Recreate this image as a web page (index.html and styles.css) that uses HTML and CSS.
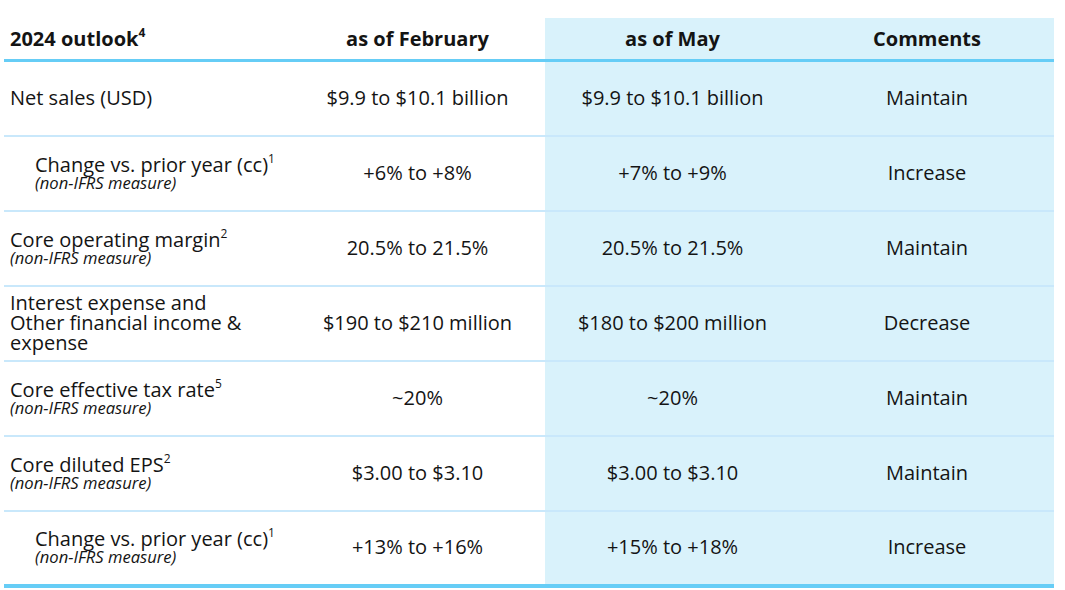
FILE: index.html
```html
<!DOCTYPE html>
<html>
<head>
<meta charset="utf-8">
<link rel="stylesheet" href="styles.css">
</head>
<body>
<div class="table">
  <div class="row head">
    <div class="cell label"><div class="main">2024 outlook<sup>4</sup></div></div>
    <div class="cell">as of February</div>
    <div class="cell hl">as of May</div>
    <div class="cell hl">Comments</div>
  </div>
  <div class="row">
    <div class="cell label"><div class="main">Net sales (USD)</div></div>
    <div class="cell">$9.9 to $10.1 billion</div>
    <div class="cell hl">$9.9 to $10.1 billion</div>
    <div class="cell hl">Maintain</div>
  </div>
  <div class="row">
    <div class="cell label indent"><div class="main">Change vs. prior year (cc)<sup>1</sup></div><div class="note">(non-IFRS measure)</div></div>
    <div class="cell">+6% to +8%</div>
    <div class="cell hl">+7% to +9%</div>
    <div class="cell hl">Increase</div>
  </div>
  <div class="row">
    <div class="cell label"><div class="main">Core operating margin<sup>2</sup></div><div class="note">(non-IFRS measure)</div></div>
    <div class="cell">20.5% to 21.5%</div>
    <div class="cell hl">20.5% to 21.5%</div>
    <div class="cell hl">Maintain</div>
  </div>
  <div class="row">
    <div class="cell label"><div class="main multi">Interest expense and<br>Other financial income &amp;<br>expense</div></div>
    <div class="cell">$190 to $210 million</div>
    <div class="cell hl">$180 to $200 million</div>
    <div class="cell hl">Decrease</div>
  </div>
  <div class="row">
    <div class="cell label"><div class="main">Core effective tax rate<sup>5</sup></div><div class="note">(non-IFRS measure)</div></div>
    <div class="cell">~20%</div>
    <div class="cell hl">~20%</div>
    <div class="cell hl">Maintain</div>
  </div>
  <div class="row">
    <div class="cell label"><div class="main">Core diluted EPS<sup>2</sup></div><div class="note">(non-IFRS measure)</div></div>
    <div class="cell">$3.00 to $3.10</div>
    <div class="cell hl">$3.00 to $3.10</div>
    <div class="cell hl">Maintain</div>
  </div>
  <div class="row last">
    <div class="cell label indent"><div class="main">Change vs. prior year (cc)<sup>1</sup></div><div class="note">(non-IFRS measure)</div></div>
    <div class="cell">+13% to +16%</div>
    <div class="cell hl">+15% to +18%</div>
    <div class="cell hl">Increase</div>
  </div>
</div>
</body>
</html>
```
FILE: styles.css
```css
html, body {
  margin: 0;
  padding: 0;
  background: #ffffff;
}
body {
  font-family: "Open Sans", "Liberation Sans", sans-serif;
  color: #141414;
  font-size: 20px;
}
.table {
  margin: 18px 0 0 4px;
  width: 1050px;
}
.row {
  display: grid;
  grid-template-columns: 286px 255px 255px 254px;
  height: 73px;
  border-bottom: 2px solid #c9e8fb;
}
.row.head {
  height: 41px;
  border-bottom: 3px solid #66cdf6;
  font-weight: 700;
}
.row.last {
  height: 72px;
  border-bottom: 4px solid #66cdf6;
}
.cell {
  display: flex;
  flex-direction: column;
  justify-content: center;
  align-items: center;
  text-align: center;
  line-height: 20px;
  padding-bottom: 2px;
}
.head .cell {
  padding-top: 1px;
  padding-bottom: 0;
}
.cell.hl {
  background: #d9f2fb;
}
.cell.label {
  align-items: flex-start;
  text-align: left;
  padding-left: 6px;
}
.cell.label.indent {
  padding-left: 31px;
}
.main {
  line-height: 20px;
  white-space: nowrap;
}
.note {
  font-style: italic;
  font-size: 16.6px;
  line-height: 16px;
  white-space: nowrap;
}
sup {
  font-size: 12px;
  line-height: 0;
  vertical-align: 9px;
  font-weight: 400;
}
.head sup {
  font-weight: 700;
}
```
